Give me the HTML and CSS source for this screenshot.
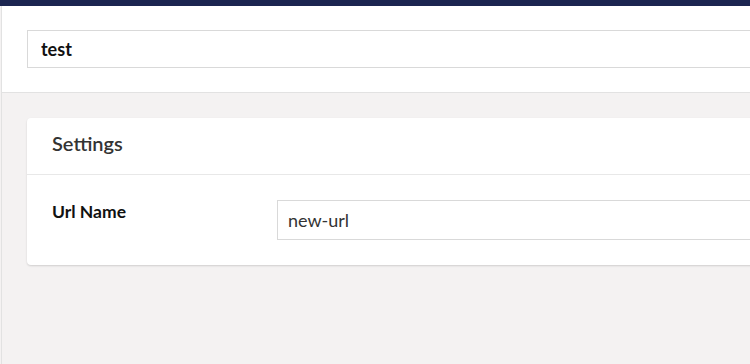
FILE: index.html
```html
<!DOCTYPE html>
<html lang="en">
<head>
<meta charset="UTF-8">
<meta name="viewport" content="width=device-width, initial-scale=1.0">
<title>Settings</title>
<link rel="stylesheet" href="styles.css">
</head>

<body>
<div class="topbar"></div>
<div class="main">
    <div class="header">
        <input class="title-input" type="text" value="test">
    </div>
    <div class="content">
        <div class="card">
            <div class="card-header">Settings</div>
            <div class="card-body">
                <div class="field">
                    <label class="field-label">Url Name</label>
                    <input class="field-input" type="text" value="new-url">
                </div>
            </div>
        </div>
    </div>
</div>
</body>
</html>
```

FILE: styles.css
```css
html, body {
    height: 100%;
}
body {
    margin: 0;
    font-family: Lato, "Open Sans", sans-serif;
    background-color: #f4f2f2;
    overflow: hidden;
}
.topbar {
    height: 6px;
    background-color: #1b2550;
}
.main {
    margin-left: 1px;
    border-left: 1px solid #e2e2e2;
    height: 100%;
}
.header {
    background: white;
    padding: 24px 0 24px 25px;
    border-bottom: 1px solid #e2e2e2;
}
input {
    font-family: Lato, "Open Sans", sans-serif;
    box-sizing: border-box;
    border: 1px solid #d9d9d9;
    outline: none;
    background: white;
}
.title-input {
    width: 760px;
    height: 38px;
    padding: 0 13px;
    font-size: 18px;
    font-weight: bold;
    color: #111;
}
.content {
    padding: 25px 0 0 25px;
}
.card {
    background: white;
    border-radius: 4px 0 0 4px;
    box-shadow: 0 1px 2px rgba(0, 0, 0, 0.15);
    width: 760px;
}
.card-header {
    height: 57px;
    box-sizing: border-box;
    border-bottom: 1px solid #e8e8e8;
    padding: 0 0 6px 25px;
    display: flex;
    align-items: center;
    font-size: 20px;
    font-weight: 600;
    color: #333;
}
.card-body {
    padding: 25px 0 25px 25px;
}
.field {
    display: flex;
    align-items: flex-start;
}
.field-label {
    width: 225px;
    padding-top: 1px;
    font-size: 17.5px;
    font-weight: bold;
    color: #111;
}
.field-input {
    flex: 1;
    height: 40px;
    padding: 0 10px;
    font-size: 18px;
    color: #333;
}
```
